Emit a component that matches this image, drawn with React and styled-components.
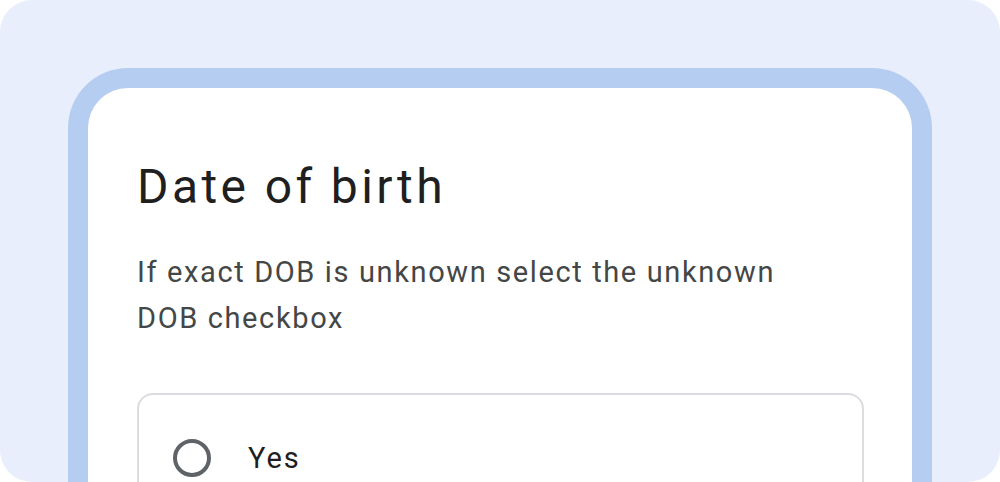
import React from "react";
import styled, { createGlobalStyle } from "styled-components";

const GlobalStyle = createGlobalStyle`
  html, body {
    margin: 0;
    padding: 0;
    background: #ffffff;
  }
  body {
    font-family: Roboto, "Noto Sans", Arial, sans-serif;
  }
`;

const Stage = styled.div`
  width: 1000px;
  height: 482px;
  box-sizing: border-box;
  padding: 68px 68px 0;
  background: #e8eefc;
  border-radius: 32px;
  overflow: hidden;
`;

const Frame = styled.div`
  height: 100%;
  box-sizing: border-box;
  padding: 20px 20px 0;
  background: #b5cdf1;
  border-radius: 60px 60px 0 0;
`;

const Card = styled.div`
  height: 100%;
  box-sizing: border-box;
  padding: 71px 48px 0 49px;
  background: #ffffff;
  border-radius: 40px 40px 0 0;
`;

const Title = styled.h1`
  margin: 0;
  font-size: 48px;
  line-height: 56px;
  font-weight: 400;
  letter-spacing: 3.4px;
  color: #1f1f1f;
`;

const Hint = styled.p`
  margin: 34px 0 0;
  max-width: 680px;
  font-size: 29px;
  line-height: 46px;
  letter-spacing: 1.62px;
  color: #444746;
`;

const OptionBox = styled.div`
  margin-top: 52px;
  border: 2px solid #dadce0;
  border-radius: 16px;
  height: 200px;
`;

const Option = styled.label`
  display: flex;
  align-items: center;
  gap: 37px;
  padding: 44px 34px 0;
  font-size: 29px;
  letter-spacing: 2px;
  color: #1f1f1f;
  cursor: pointer;
`;

const Radio = styled.span`
  width: 38px;
  height: 38px;
  box-sizing: border-box;
  border: 4px solid #5f6368;
  border-radius: 50%;
  flex-shrink: 0;
`;

export default function App() {
  return (
    <>
      <GlobalStyle />
      <Stage>
        <Frame>
          <Card>
            <Title>Date of birth</Title>
            <Hint>
              If exact DOB is unknown select the unknown DOB checkbox
            </Hint>
            <OptionBox>
              <Option>
                <Radio />
                <span>Yes</span>
              </Option>
            </OptionBox>
          </Card>
        </Frame>
      </Stage>
    </>
  );
}
